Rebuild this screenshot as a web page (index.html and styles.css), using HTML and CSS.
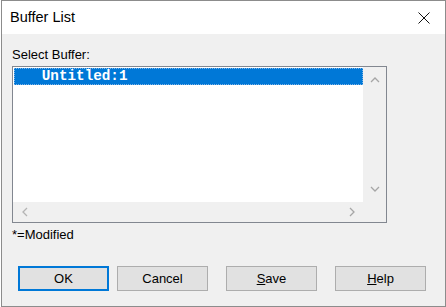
FILE: index.html
```html
<!DOCTYPE html>
<html lang="en">
<head>
    <meta charset="UTF-8">
    <title>Buffer List</title>
    <link rel="stylesheet" href="styles.css">
</head>
<body>
    <div class="window">
        <!-- Title Bar -->
        <div class="titlebar">
            <span class="title">Buffer List</span>
            <svg class="close" width="12" height="12" viewBox="0 0 12 12">
                <path d="M0.5 0.5 L11.5 11.5 M11.5 0.5 L0.5 11.5" stroke="#111" stroke-width="1" fill="none"/>
            </svg>
        </div>

        <!-- Dialog Body -->
        <div class="content">
            <div class="label">Select Buffer:</div>

            <div class="listbox">
                <div class="list-area">
                    <div class="item selected">&nbsp;&nbsp;&nbsp;Untitled:1</div>
                </div>
                <div class="vscroll">
                    <svg width="10" height="6" viewBox="0 0 10 6"><polyline points="1,5 5,1 9,5" stroke="#a6a6a6" stroke-width="1.3" fill="none"/></svg>
                    <svg width="10" height="6" viewBox="0 0 10 6"><polyline points="1,1 5,5 9,1" stroke="#a6a6a6" stroke-width="1.3" fill="none"/></svg>
                </div>
                <div class="hscroll">
                    <svg width="6" height="10" viewBox="0 0 6 10"><polyline points="5,1 1,5 5,9" stroke="#b4b4b4" stroke-width="1.3" fill="none"/></svg>
                    <svg width="6" height="10" viewBox="0 0 6 10"><polyline points="1,1 5,5 1,9" stroke="#a6a6a6" stroke-width="1.3" fill="none"/></svg>
                </div>
                <div class="corner"></div>
            </div>

            <div class="note">*=Modified</div>

            <!-- Buttons -->
            <div class="buttons">
                <button class="btn default">OK</button>
                <button class="btn">Cancel</button>
                <button class="btn wide-gap"><u>S</u>ave</button>
                <button class="btn wide-gap"><u>H</u>elp</button>
            </div>
        </div>
    </div>
</body>
</html>
```

FILE: styles.css
```css
body {
    margin: 0;
    width: 446px;
    height: 307px;
    background: #ffffff;
    font-family: 'Liberation Sans', Arial, sans-serif;
    overflow: hidden;
}

.window {
    margin-left: 1px;
    width: 443px;
    height: 305px;
    border: 1px solid #8c8c8c;
    background: #f0f0f0;
    display: flex;
    flex-direction: column;
}

/* Title Bar */
.titlebar {
    height: 33px;
    background: #ffffff;
    display: flex;
    align-items: center;
    justify-content: space-between;
    padding: 0 15px 0 8px;
}

.title {
    font-size: 14.5px;
    color: #000;
    margin-top: -1px;
}

.close {
    margin-top: 1px;
}

/* Dialog Body */
.content {
    padding: 0 0 0 10px;
}

.label {
    font-size: 13px;
    line-height: 15px;
    margin-top: 13px;
    color: #000;
}

.listbox {
    margin-top: 4px;
    width: 373px;
    height: 155px;
    border: 1px solid #828790;
    display: grid;
    grid-template-columns: 1fr 23px;
    grid-template-rows: 1fr 20px;
}

.list-area {
    background: #ffffff;
    padding: 1px 0 0 1px;
}

.item {
    font-family: 'Liberation Mono', 'Courier New', monospace;
    font-weight: bold;
    font-size: 14.3px;
    height: 17px;
    line-height: 17px;
    padding-left: 2px;
    white-space: pre;
}

.item.selected {
    background: #0078d7;
    color: #ffffff;
    outline: 1px dotted #7fb4e6;
    outline-offset: -1px;
}

.vscroll {
    background: #f0f0f0;
    display: flex;
    flex-direction: column;
    justify-content: space-between;
    align-items: center;
    padding: 10px 0 10px 0;
}

.hscroll {
    background: #f0f0f0;
    display: flex;
    justify-content: space-between;
    align-items: center;
    padding: 0 8px 0 9px;
}

.corner {
    background: #f0f0f0;
}

.note {
    font-size: 13px;
    line-height: 15px;
    margin-top: 4px;
    color: #000;
}

/* Buttons */
.buttons {
    display: flex;
    margin-top: 24px;
    padding-left: 6px;
}

.btn {
    width: 91px;
    height: 25px;
    margin-right: 8px;
    background: #e1e1e1;
    border: 1px solid #adadad;
    font-family: 'Liberation Sans', Arial, sans-serif;
    font-size: 13px;
    color: #000;
    padding: 0;
}

.btn.default {
    border: 2px solid #0078d7;
}

.btn.wide-gap {
    margin-left: 10px;
}
```
